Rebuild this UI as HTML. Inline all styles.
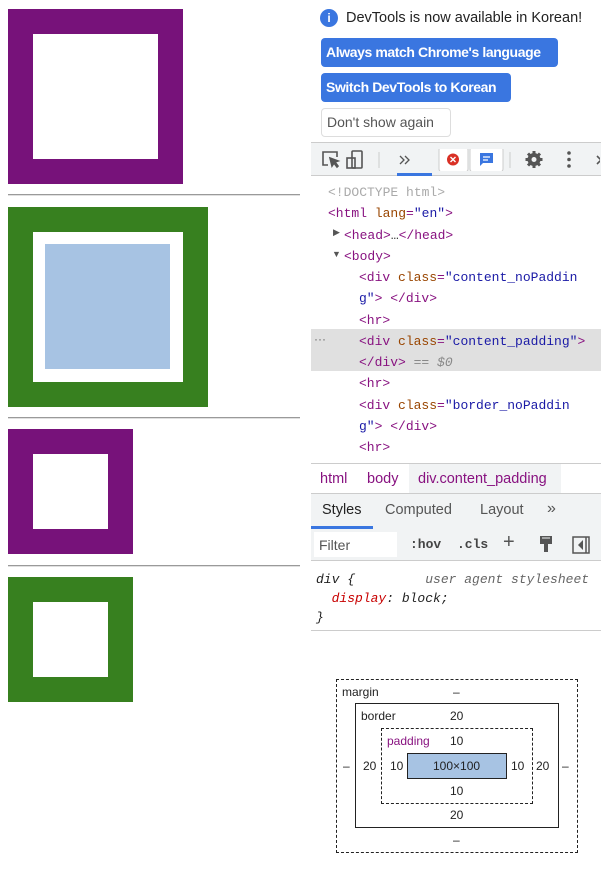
<!DOCTYPE html>
<html><head><style>
body{margin:0;width:601px;height:880px;background:#fff;position:relative;overflow:hidden;font-family:"Liberation Sans",sans-serif;}
.a{position:absolute;white-space:nowrap}
.code{font-family:"Liberation Mono",monospace;font-size:13px;color:#881280;white-space:pre;}
.at{color:#994500}.av{color:#1a1aa6}
.btn{position:absolute;left:321px;height:29px;border-radius:4px;background:#3a76e0;color:#fff;font-weight:bold;font-size:14px;letter-spacing:-0.4px;line-height:29px;padding:0 5px;box-sizing:border-box;white-space:nowrap;overflow:hidden}
.sm{font-size:12px;color:#222}
</style></head><body>
<div class="a" style="left:8px;top:9px;width:125px;height:125px;border:25px solid #77127a;background:#fff"></div>
<div class="a" style="left:8px;top:194px;width:292px;height:1px;background:#9a9a9a;border-bottom:1px solid #e0e0e0"></div>
<div class="a" style="left:8px;top:207px;width:150px;height:150px;border:25px solid #37801f;background:#fff"></div>
<div class="a" style="left:45px;top:244px;width:125px;height:125px;background:#a7c3e3"></div>
<div class="a" style="left:8px;top:417px;width:292px;height:1px;background:#9a9a9a;border-bottom:1px solid #e0e0e0"></div>
<div class="a" style="left:8px;top:429px;width:75px;height:75px;border:25px solid #77127a;background:#fff"></div>
<div class="a" style="left:8px;top:565px;width:292px;height:1px;background:#9a9a9a;border-bottom:1px solid #e0e0e0"></div>
<div class="a" style="left:8px;top:577px;width:75px;height:75px;border:25px solid #37801f;background:#fff"></div>

<div class="a" style="left:320px;top:9px;width:18px;height:18px;border-radius:50%;background:#3a76e0;color:#fff;font-weight:bold;font-size:12px;text-align:center;line-height:18px">i</div>
<div class="a" style="left:346px;top:10px;font-size:14.5px;color:#222">DevTools is now available in Korean!</div>
<div class="btn" style="top:38px;width:237px">Always match Chrome's language</div>
<div class="btn" style="top:73px;width:190px">Switch DevTools to Korean</div>
<div class="btn" style="top:108px;width:130px;background:#fff;color:#555;border:1px solid #ddd;font-weight:normal;line-height:27px;letter-spacing:0">Don't show again</div>

<div class="a" style="left:311px;top:142px;width:290px;height:1px;background:#ccc"></div>
<div class="a" style="left:311px;top:143px;width:290px;height:32px;background:#f1f3f4"></div>
<div class="a" style="left:311px;top:175px;width:290px;height:1px;background:#ccc"></div>
<svg class="a" style="left:320px;top:149px" width="280" height="22" viewBox="0 0 280 22">
<g fill="none" stroke="#555" stroke-width="1.6">
<path d="M8 16H3V3h14v5"/><path d="M10 9l8 3-3 1 3 4-1 1-3-4-2 3z" fill="#555"/>
<rect x="32" y="2" width="10" height="17" rx="1"/><rect x="27" y="9" width="8" height="10"/>
<path d="M80 7l4 4-4 4M85 7l4 4-4 4" stroke-width="1.3"/>
</g>
<line x1="59" y1="3" x2="59" y2="19" stroke="#ccc"/>
<rect x="119" y="-2" width="29" height="25" rx="3" fill="#fff" stroke="#ccc"/>
<circle cx="133" cy="10.5" r="6" fill="#d93025"/><path d="M130.5 8l5 5M135.5 8l-5 5" stroke="#fff" stroke-width="1.4"/>
<rect x="150" y="-2" width="33" height="25" rx="3" fill="#fff" stroke="#ccc"/>
<path d="M160 4h13v10h-10l-3 3z" fill="#3a76e0"/><path d="M163 8h7M163 11h5" stroke="#fff" stroke-width="1.3"/>
<line x1="190" y1="3" x2="190" y2="19" stroke="#ccc"/>
<path d="M214 2v17M205.5 10.5h17M208 4.5l12 12M220 4.5l-12 12" stroke="#555" stroke-width="3"/>
<circle cx="214" cy="10.5" r="6.5" fill="#555"/><circle cx="214" cy="10.5" r="2.5" fill="#f1f3f4"/>
<circle cx="249" cy="4" r="1.8" fill="#555"/><circle cx="249" cy="10.5" r="1.8" fill="#555"/><circle cx="249" cy="17" r="1.8" fill="#555"/>
<path d="M277 7l4 4-4 4" stroke="#555" stroke-width="1.6" fill="none"/>
</svg>
<div class="a" style="left:397px;top:173px;width:35px;height:3px;background:#3a76e0"></div>

<div class="a" style="left:311px;top:329px;width:290px;height:42px;background:#e0e0e0"></div>
<div class="a code" style="left:328px;top:182px;line-height:21.3px"><span style="color:#aaa">&lt;!DOCTYPE html&gt;</span>
&lt;html <span class="at">lang</span>=<span class="av">"en"</span>&gt;
</div>
<div class="a code" style="left:344px;top:225px;line-height:21.3px">&lt;head&gt;<span style="color:#333">…</span>&lt;/head&gt;
&lt;body&gt;</div>
<div class="a" style="left:333px;top:227px;font-size:9px;color:#555">▶</div>
<div class="a" style="left:332px;top:249px;font-size:9px;color:#555">▼</div>
<div class="a code" style="left:359px;top:267px;line-height:21.3px">&lt;div <span class="at">class</span>=<span class="av">"content_noPaddin</span>
<span class="av">g"</span>&gt; &lt;/div&gt;
&lt;hr&gt;
&lt;div <span class="at">class</span>=<span class="av">"content_padding"</span>&gt;
&lt;/div&gt; <span style="color:#888">== <i>$0</i></span>
&lt;hr&gt;
&lt;div <span class="at">class</span>=<span class="av">"border_noPaddin</span>
<span class="av">g"</span>&gt; &lt;/div&gt;
&lt;hr&gt;</div>
<div class="a" style="left:314px;top:332px;font-size:12px;color:#666">···</div>

<div class="a" style="left:311px;top:463px;width:290px;height:1px;background:#ccc"></div>
<div class="a" style="left:409px;top:464px;width:152px;height:29px;background:#f1f3f4"></div>
<div class="a" style="left:311px;top:493px;width:290px;height:36px;background:#f1f3f4;border-top:1px solid #ccc;border-bottom:1px solid #ccc"></div>
<div class="a" style="left:320px;top:471px;font-size:14.5px;color:#881280">html</div>
<div class="a" style="left:367px;top:471px;font-size:14.5px;color:#881280">body</div>
<div class="a" style="left:418px;top:471px;font-size:14.5px;color:#881280">div.content_padding</div>
<div class="a" style="left:322px;top:502px;font-size:14.5px;color:#222">Styles</div>
<div class="a" style="left:385px;top:502px;font-size:14.5px;color:#555">Computed</div>
<div class="a" style="left:480px;top:502px;font-size:14.5px;color:#555">Layout</div>
<div class="a" style="left:547px;top:500px;font-size:16px;color:#555">»</div>
<div class="a" style="left:311px;top:526px;width:62px;height:3px;background:#3a76e0"></div>
<div class="a" style="left:311px;top:530px;width:290px;height:30px;background:#f1f3f4;border-bottom:1px solid #ccc"></div>
<div class="a" style="left:314px;top:532px;width:83px;height:25px;background:#fff"></div>
<div class="a" style="left:319px;top:537px;font-size:14px;color:#555">Filter</div>
<div class="a" style="left:410px;top:537px;font-size:13px;font-weight:bold;color:#444;font-family:'Liberation Mono',monospace">:hov</div>
<div class="a" style="left:457px;top:537px;font-size:13px;font-weight:bold;color:#444;font-family:'Liberation Mono',monospace">.cls</div>
<div class="a" style="left:503px;top:531px;font-size:20px;color:#555">+</div>
<svg class="a" style="left:537px;top:534px" width="64" height="22"><path d="M3 2h12v8H3z M7 10h4v8H7z" fill="#555"/><path d="M5 4h8" stroke="#f1f3f4"/><rect x="36" y="3" width="16" height="16" fill="none" stroke="#555" stroke-width="1.5"/><path d="M46 6v10l-5-5z" fill="#555"/><path d="M49 3v16" stroke="#555" stroke-width="1.5"/></svg>
<div class="a code" style="left:316px;top:570px;line-height:19px;color:#222;font-style:italic">div {         <span style="color:#666">user agent stylesheet</span>
  <span style="color:#c80000">display</span>: block;
}</div>
<div class="a" style="left:311px;top:630px;width:290px;height:1px;background:#ccc"></div>

<div class="a" style="left:336px;top:679px;width:240px;height:172px;border:1px dashed #222"></div>
<div class="a" style="left:355px;top:703px;width:202px;height:123px;border:1px solid #222"></div>
<div class="a" style="left:381px;top:728px;width:150px;height:74px;border:1px dashed #222"></div>
<div class="a" style="left:407px;top:753px;width:98px;height:24px;border:1px solid #222;background:#a7c3e3"></div>
<div class="a sm" style="left:342px;top:685px">margin</div>
<div class="a sm" style="left:453px;top:685px">–</div>
<div class="a sm" style="left:361px;top:709px">border</div>
<div class="a sm" style="left:450px;top:709px">20</div>
<div class="a sm" style="left:387px;top:734px;color:#881280">padding</div>
<div class="a sm" style="left:450px;top:734px">10</div>
<div class="a sm" style="left:343px;top:759px">–</div>
<div class="a sm" style="left:363px;top:759px">20</div>
<div class="a sm" style="left:390px;top:759px">10</div>
<div class="a sm" style="left:433px;top:759px">100×100</div>
<div class="a sm" style="left:511px;top:759px">10</div>
<div class="a sm" style="left:536px;top:759px">20</div>
<div class="a sm" style="left:562px;top:759px">–</div>
<div class="a sm" style="left:450px;top:784px">10</div>
<div class="a sm" style="left:450px;top:808px">20</div>
<div class="a sm" style="left:453px;top:833px">–</div>
</body></html>
